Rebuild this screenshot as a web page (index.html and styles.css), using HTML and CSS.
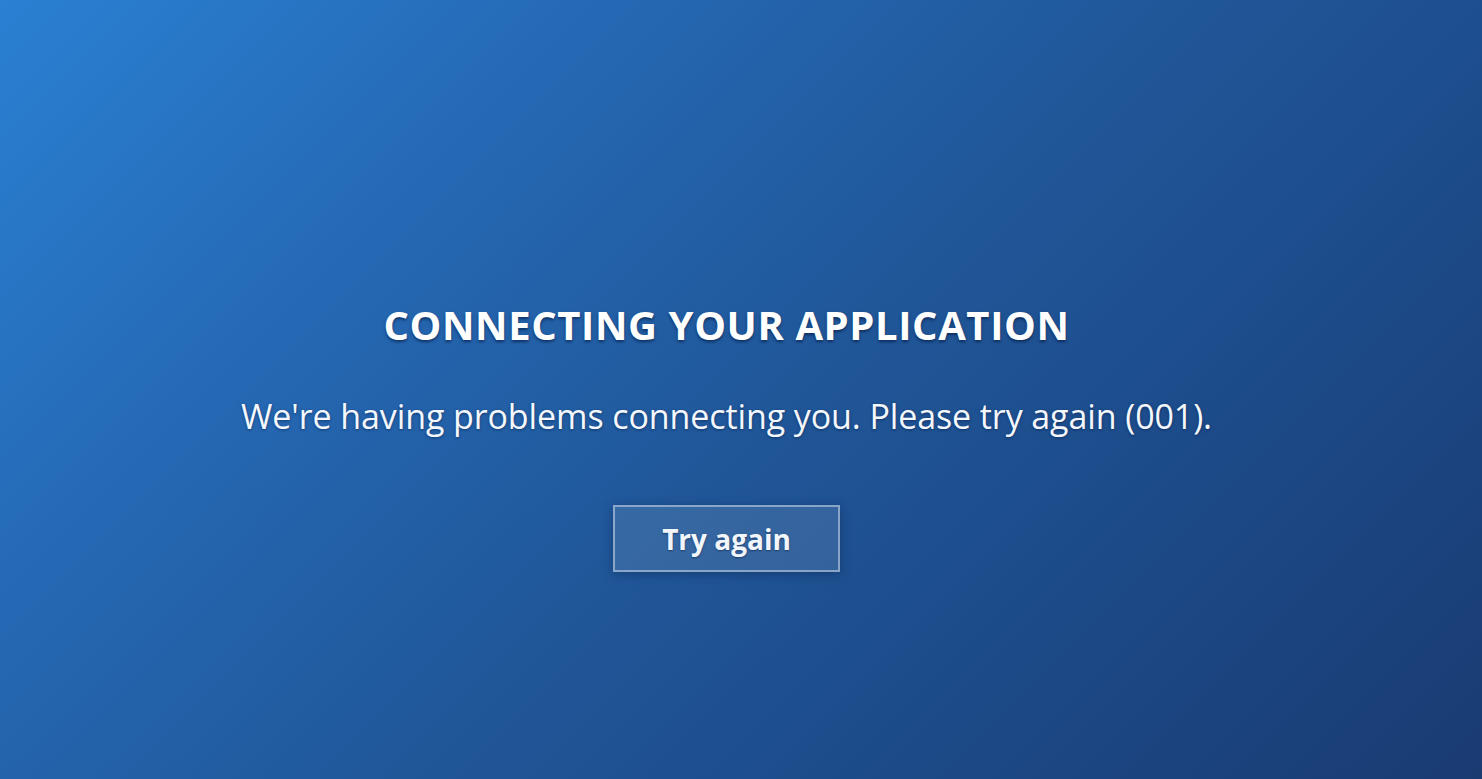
FILE: index.html
```html
<!DOCTYPE html>
<html lang="en">
<head>
<meta charset="utf-8">
<title>Connecting your application</title>
<link rel="stylesheet" href="styles.css">
</head>
<body>
<main class="screen">
  <section class="message">
    <h1 class="title">CONNECTING YOUR APPLICATION</h1>
    <p class="text">We're having problems connecting you. Please try again (001).</p>
    <button class="retry" type="button">Try again</button>
  </section>
</main>
</body>
</html>
```

FILE: styles.css
```css
html, body {
  margin: 0;
  padding: 0;
  height: 100%;
}
body {
  font-family: "Open Sans", "Noto Sans", sans-serif;
  color: #fff;
  overflow: hidden;
}
.screen {
  box-sizing: border-box;
  width: 100%;
  height: 100vh;
  padding-right: 29px;
  background: linear-gradient(135deg, #2a80d3 0%, #2568b3 28%, #205799 52%, #1c4a88 74%, #1a3b72 100%);
  display: flex;
  justify-content: center;
}
.message {
  display: flex;
  flex-direction: column;
  align-items: center;
  padding-top: 298px;
}
.title {
  margin: 0;
  font-size: 40px;
  font-weight: 700;
  line-height: 54px;
  letter-spacing: 0.6px;
  text-shadow: 0 2px 3px rgba(0, 20, 60, 0.6);
}
.text {
  margin: 42px 0 0;
  font-size: 34px;
  font-weight: 400;
  line-height: 44px;
  letter-spacing: -0.1px;
  color: #f4f7fb;
  text-shadow: 0 1px 3px rgba(0, 20, 60, 0.5);
}
.retry {
  margin-top: 67px;
  width: 227px;
  height: 67px;
  font-family: "Open Sans", "Noto Sans", sans-serif;
  font-size: 28px;
  font-weight: 700;
  color: #f2f6fb;
  background: rgba(255, 255, 255, 0.1);
  border: 2px solid rgba(255, 255, 255, 0.42);
  box-shadow: 0 2px 10px rgba(0, 20, 60, 0.35);
  text-shadow: 0 1px 2px rgba(0, 20, 60, 0.5);
  padding: 0;
  cursor: pointer;
}
```
